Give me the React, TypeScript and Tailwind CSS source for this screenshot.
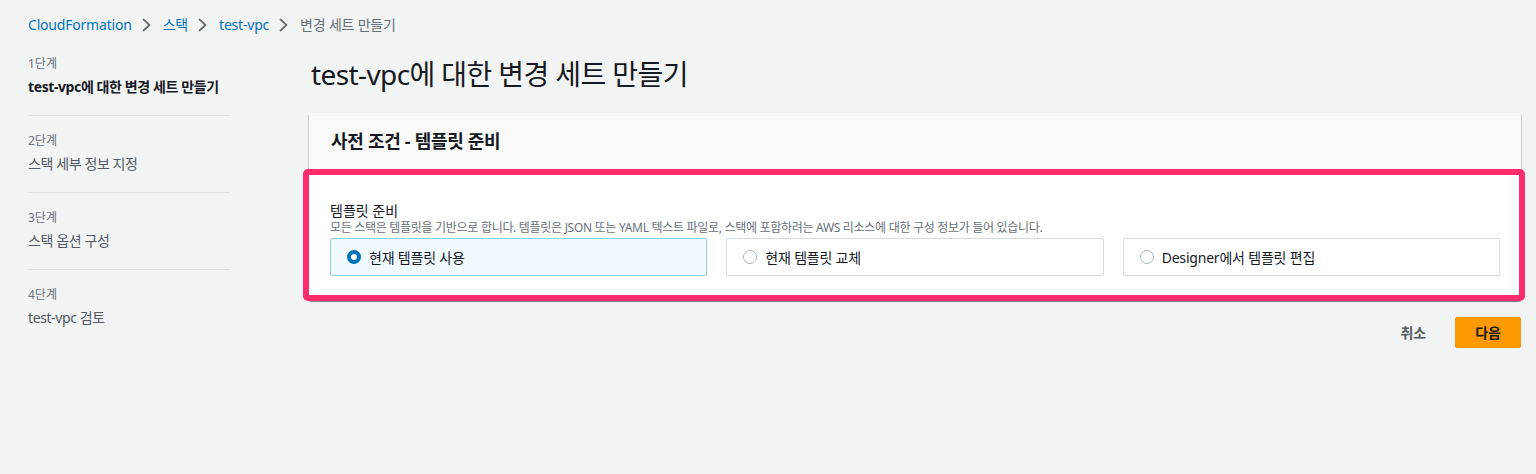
const crumbs = [
  { label: 'CloudFormation', link: true },
  { label: '스택', link: true },
  { label: 'test-vpc', link: true },
  { label: '변경 세트 만들기', link: false },
];

const steps = [
  { step: '1단계', title: 'test-vpc에 대한 변경 세트 만들기', active: true },
  { step: '2단계', title: '스택 세부 정보 지정', active: false },
  { step: '3단계', title: '스택 옵션 구성', active: false },
  { step: '4단계', title: 'test-vpc 검토', active: false },
];

const options = [
  { label: '현재 템플릿 사용', checked: true },
  { label: '현재 템플릿 교체', checked: false },
  { label: 'Designer에서 템플릿 편집', checked: false },
];

function Chevron() {
  return (
    <svg width="9" height="14" viewBox="0 0 9 14" fill="none" className="shrink-0">
      <polyline points="1.5,1.5 7.5,7 1.5,12.5" stroke="#687078" strokeWidth="1.8" strokeLinecap="round" strokeLinejoin="round" />
    </svg>
  );
}

function Radio({ checked }: { checked: boolean }) {
  return checked ? (
    <span className="h-[14px] w-[14px] shrink-0 rounded-full border-[4px] border-[#0073bb] bg-white" />
  ) : (
    <span className="h-[14px] w-[14px] shrink-0 rounded-full border-[1.5px] border-[#aab7b8] bg-white" />
  );
}

export default function App() {
  return (
    <div
      className="min-h-[474px] bg-[#f2f3f3] text-[#16191f]"
      style={{ fontFamily: '"Noto Sans", "Noto Sans CJK KR", sans-serif' }}
    >
      <nav className="flex h-[35px] items-end px-[28px] text-[14px] leading-[20px] tracking-[-0.2px]">
        {crumbs.map((c, i) => (
          <div key={c.label} className="flex items-center">
            <span className={c.link ? 'text-[#0073bb]' : 'text-[#687078]'}>{c.label}</span>
            {i < crumbs.length - 1 && (
              <span className="mr-[12px] ml-[10px] flex items-center">
                <Chevron />
              </span>
            )}
          </div>
        ))}
      </nav>

      <div className="flex pt-[21px]">
        <aside className="ml-[28px] w-[202px] shrink-0">
          {steps.map((s, i) => (
            <div
              key={s.step}
              className={`pb-[18px] ${i > 0 ? 'pt-[17px]' : ''} ${i < steps.length - 1 ? 'border-b border-[#dfe3e3]' : ''}`}
            >
              <div className="text-[12px] leading-[16px] text-[#687078]">{s.step}</div>
              <div
                className={`mt-[5px] text-[14px] leading-[20px] tracking-[-0.4px] ${s.active ? 'font-bold text-[#16191f]' : 'text-[#545b64]'}`}
              >
                {s.title}
              </div>
            </div>
          ))}
        </aside>

        <main className="ml-[79px] mr-[15px] flex-1">
          <h1 className="ml-[2px] text-[28px] leading-[36px] font-normal tracking-[-0.6px]">
            test-vpc에 대한 변경 세트 만들기
          </h1>

          <section className="mt-[21px] rounded-[2px] bg-white shadow-[0_1px_1px_0_rgba(0,28,36,0.3),1px_1px_1px_0_rgba(0,28,36,0.15),-1px_1px_1px_0_rgba(0,28,36,0.15)]">
            <div className="flex h-[56px] items-center bg-[#fafafa] px-[22px]">
              <h2 className="text-[18px] leading-[22px] font-bold tracking-[-0.3px]">사전 조건 - 템플릿 준비</h2>
            </div>
            <div className="-mr-[4px] -ml-[6px] rounded-[5px] border-[6px] border-[#ff2d6d] bg-white pt-[27px] pr-[19px] pb-[19px] pl-[21px]">
              <div className="text-[14px] leading-[18px]">템플릿 준비</div>
              <div className="text-[12px] leading-[16px] tracking-[-0.3px] text-[#687078]">
                모든 스택은 템플릿을 기반으로 합니다. 템플릿은 JSON 또는 YAML 텍스트 파일로, 스택에 포함하려는 AWS 리소스에 대한 구성 정보가 들어 있습니다.
              </div>
              <div className="mt-[2px] grid grid-cols-3 gap-[19px]">
                {options.map((o) => (
                  <div
                    key={o.label}
                    className={`flex h-[38px] items-center gap-[8px] rounded-[2px] border pl-[16px] text-[14px] tracking-[-0.2px] ${
                      o.checked ? 'border-[#8dcfe8] bg-[#f1faff]' : 'border-[#d5dbdb] bg-white'
                    }`}
                  >
                    <Radio checked={o.checked} />
                    <span>{o.label}</span>
                  </div>
                ))}
              </div>
            </div>
          </section>

          <div className="mt-[16px] flex items-center justify-end gap-[29px]">
            <span className="text-[14px] font-bold text-[#545b64]">취소</span>
            <button
              type="button"
              className="h-[31px] rounded-[2px] bg-[#ff9900] px-[20px] text-[14px] font-bold text-[#16191f]"
            >
              다음
            </button>
          </div>
        </main>
      </div>
    </div>
  );
}
